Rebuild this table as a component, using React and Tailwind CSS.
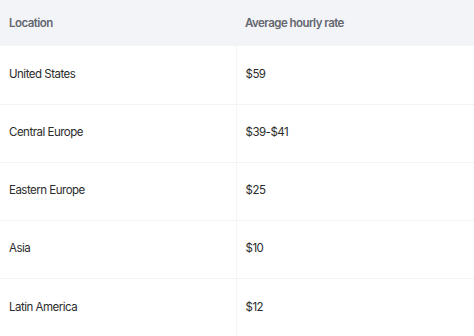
const rows = [
  ['United States', '$59'],
  ['Central Europe', '$39-$41'],
  ['Eastern Europe', '$25'],
  ['Asia', '$10'],
  ['Latin America', '$12'],
];

export default function App() {
  return (
    <div className="w-[474px] h-[336px] overflow-hidden bg-white" style={{ fontFamily: 'Inter, "Noto Sans", sans-serif' }}>
      <table className="w-full border-collapse">
        <thead>
          <tr className="h-[46px] bg-[#f3f4f8] text-left">
            <th className="w-[236px] pl-[9px] pt-[1px] text-[11.5px] tracking-[-0.55px] font-semibold text-[#63666e]">Location</th>
            <th className="pl-[9px] pt-[1px] text-[11.5px] tracking-[-0.55px] font-semibold text-[#63666e]">Average hourly rate</th>
          </tr>
        </thead>
        <tbody>
          {rows.map(([loc, rate], i) => (
            <tr key={loc} className={`h-[58px] ${i > 0 ? 'border-t border-[#f3f3f3]' : ''}`}>
              <td className="pl-[9px] text-[11.5px] tracking-[-0.5px] text-[#2b2b2b] border-r border-[#f5f5f5]">{loc}</td>
              <td className="pl-[9px] text-[11.5px] tracking-[-0.5px] text-[#2b2b2b]">{rate}</td>
            </tr>
          ))}
        </tbody>
      </table>
    </div>
  );
}
